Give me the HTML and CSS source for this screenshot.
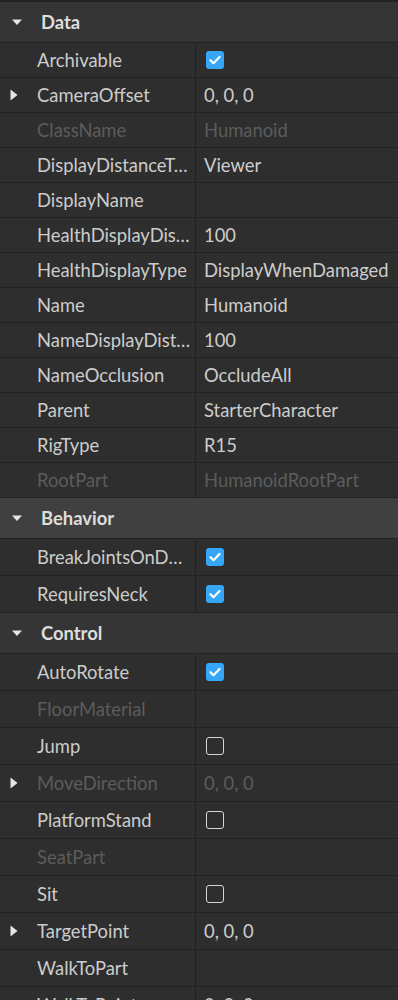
FILE: index.html
```html
<!DOCTYPE html>
<html lang="en">
<head>
    <meta charset="UTF-8">
    <meta name="viewport" content="width=device-width, initial-scale=1.0">
    <title>Properties - Humanoid</title>
    <link rel="stylesheet" href="styles.css">
</head>
<body>
    <div class="panel">
        <!-- Data -->
        <div class="section">
            <div class="section-head">
                <svg class="caret" width="12" height="8" viewBox="0 0 12 8"><path d="M1 1.5h10L6 7z" fill="#e6e6e6"/></svg>
                <span>Data</span>
            </div>
            <div class="prop"><div class="name"><span class="name-text">Archivable</span></div><div class="value"><span class="check on"><svg width="12" height="10" viewBox="0 0 12 10"><path d="M1.5 5.2l3 3L10.5 2" fill="none" stroke="#fff" stroke-width="2.2" stroke-linecap="round" stroke-linejoin="round"/></svg></span></div></div>
            <div class="prop"><div class="name"><svg class="expand" width="8" height="12" viewBox="0 0 8 12"><path d="M0.5 0.5v11l7-5.5z" fill="#e6e6e6"/></svg><span class="name-text">CameraOffset</span></div><div class="value">0, 0, 0</div></div>
            <div class="prop dim"><div class="name"><span class="name-text">ClassName</span></div><div class="value">Humanoid</div></div>
            <div class="prop"><div class="name"><span class="name-text">DisplayDistanceType</span></div><div class="value">Viewer</div></div>
            <div class="prop"><div class="name"><span class="name-text">DisplayName</span></div><div class="value"></div></div>
            <div class="prop"><div class="name"><span class="name-text">HealthDisplayDistance</span></div><div class="value">100</div></div>
            <div class="prop"><div class="name"><span class="name-text">HealthDisplayType</span></div><div class="value">DisplayWhenDamaged</div></div>
            <div class="prop"><div class="name"><span class="name-text">Name</span></div><div class="value">Humanoid</div></div>
            <div class="prop"><div class="name"><span class="name-text">NameDisplayDistance</span></div><div class="value">100</div></div>
            <div class="prop"><div class="name"><span class="name-text">NameOcclusion</span></div><div class="value">OccludeAll</div></div>
            <div class="prop"><div class="name"><span class="name-text">Parent</span></div><div class="value">StarterCharacter</div></div>
            <div class="prop"><div class="name"><span class="name-text">RigType</span></div><div class="value">R15</div></div>
            <div class="prop dim"><div class="name"><span class="name-text">RootPart</span></div><div class="value">HumanoidRootPart</div></div>
        </div>

        <!-- Behavior -->
        <div class="section roomy">
            <div class="section-head hover">
                <svg class="caret" width="12" height="8" viewBox="0 0 12 8"><path d="M1 1.5h10L6 7z" fill="#e6e6e6"/></svg>
                <span>Behavior</span>
            </div>
            <div class="prop"><div class="name"><span class="name-text">BreakJointsOnDeath</span></div><div class="value"><span class="check on"><svg width="12" height="10" viewBox="0 0 12 10"><path d="M1.5 5.2l3 3L10.5 2" fill="none" stroke="#fff" stroke-width="2.2" stroke-linecap="round" stroke-linejoin="round"/></svg></span></div></div>
            <div class="prop"><div class="name"><span class="name-text">RequiresNeck</span></div><div class="value"><span class="check on"><svg width="12" height="10" viewBox="0 0 12 10"><path d="M1.5 5.2l3 3L10.5 2" fill="none" stroke="#fff" stroke-width="2.2" stroke-linecap="round" stroke-linejoin="round"/></svg></span></div></div>
        </div>

        <!-- Control -->
        <div class="section roomy">
            <div class="section-head">
                <svg class="caret" width="12" height="8" viewBox="0 0 12 8"><path d="M1 1.5h10L6 7z" fill="#e6e6e6"/></svg>
                <span>Control</span>
            </div>
            <div class="prop"><div class="name"><span class="name-text">AutoRotate</span></div><div class="value"><span class="check on"><svg width="12" height="10" viewBox="0 0 12 10"><path d="M1.5 5.2l3 3L10.5 2" fill="none" stroke="#fff" stroke-width="2.2" stroke-linecap="round" stroke-linejoin="round"/></svg></span></div></div>
            <div class="prop dim"><div class="name"><span class="name-text">FloorMaterial</span></div><div class="value"></div></div>
            <div class="prop"><div class="name"><span class="name-text">Jump</span></div><div class="value"><span class="check"></span></div></div>
            <div class="prop dim"><div class="name"><svg class="expand" width="8" height="12" viewBox="0 0 8 12"><path d="M0.5 0.5v11l7-5.5z" fill="#e6e6e6"/></svg><span class="name-text">MoveDirection</span></div><div class="value">0, 0, 0</div></div>
            <div class="prop"><div class="name"><span class="name-text">PlatformStand</span></div><div class="value"><span class="check"></span></div></div>
            <div class="prop dim"><div class="name"><span class="name-text">SeatPart</span></div><div class="value"></div></div>
            <div class="prop"><div class="name"><span class="name-text">Sit</span></div><div class="value"><span class="check"></span></div></div>
            <div class="prop"><div class="name"><svg class="expand" width="8" height="12" viewBox="0 0 8 12"><path d="M0.5 0.5v11l7-5.5z" fill="#e6e6e6"/></svg><span class="name-text">TargetPoint</span></div><div class="value">0, 0, 0</div></div>
            <div class="prop"><div class="name"><span class="name-text">WalkToPart</span></div><div class="value"></div></div>
            <div class="prop"><div class="name"><svg class="expand" width="8" height="12" viewBox="0 0 8 12"><path d="M0.5 0.5v11l7-5.5z" fill="#e6e6e6"/></svg><span class="name-text">WalkToPoint</span></div><div class="value">0, 0, 0</div></div>
        </div>
    </div>
</body>
</html>
```
FILE: styles.css
```css
body {
    margin: 0;
    background-color: #2e2e2e;
    font-family: Lato, "Open Sans", sans-serif;
    font-size: 18.4px;
    color: #cccccc;
    overflow: hidden;
}

.panel {
    border-top: 2px solid #222222;
}

.section-head {
    display: flex;
    align-items: center;
    height: 40px;
    background-color: #353535;
    border-bottom: 1px solid #222222;
    font-weight: bold;
    color: #dddddd;
}

.section-head.hover { background-color: #404040; }

.section-head .caret {
    margin: 0 18px 0 11px;
}

.prop {
    display: grid;
    grid-template-columns: 196px 1fr;
    height: 34px;
    border-bottom: 1px solid #222222;
}

.roomy .prop { height: 36px; }

.name {
    position: relative;
    display: flex;
    align-items: center;
    min-width: 0;
    padding: 0 4px 0 37px;
    border-right: 1px solid #222222;
    white-space: nowrap;
    overflow: hidden;
}

.name-text {
    min-width: 0;
    overflow: hidden;
    text-overflow: ellipsis;
}

.name .expand {
    position: absolute;
    left: 10px;
    top: 50%;
    margin-top: -6px;
}

.value {
    display: flex;
    align-items: center;
    padding-left: 8px;
    white-space: nowrap;
    overflow: hidden;
}

.prop.dim .name,
.prop.dim .value {
    color: #5c5c5c;
}

.check {
    display: flex;
    align-items: center;
    justify-content: center;
    box-sizing: border-box;
    width: 18px;
    height: 18px;
    margin-left: 2px;
    border: 1.5px solid #d4d4d4;
    border-radius: 3px;
}

.check.on {
    border: none;
    background-color: #35a7f6;
}
```
